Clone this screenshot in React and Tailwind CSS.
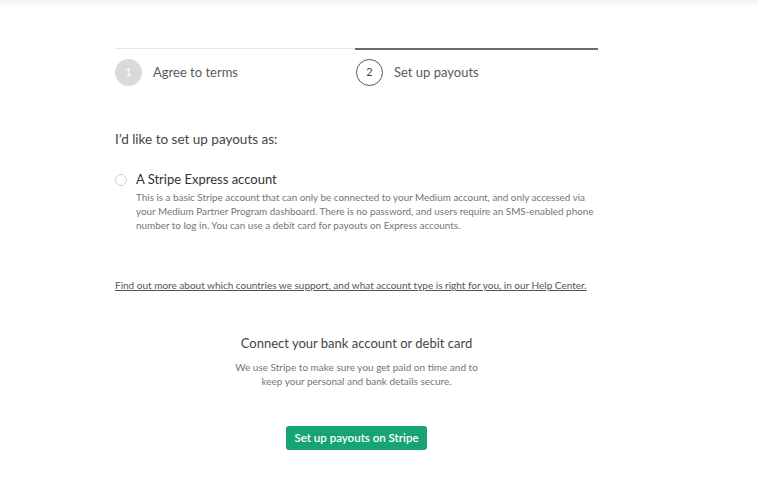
export default function App() {
  const font = { fontFamily: 'Lato, "Open Sans", sans-serif' };
  return (
    <div className="relative min-h-[501px] w-[758px] bg-white text-[#292929]" style={font}>
      <div className="h-[7px] bg-gradient-to-b from-[#f2f2f2] to-white" />
      <div className="ml-[115px] w-[483px] pt-[41px]">
        <div className="flex">
          <div className="w-[240px]">
            <div className="h-px bg-[#e6e6e6]" />
            <div className="mt-[10px] flex items-center">
              <div className="flex h-[27px] w-[27px] items-center justify-center rounded-full bg-[#dadada] text-[11px] text-white">1</div>
              <span className="ml-[11px] pt-[1px] text-[13px] text-[#5a5a5a]">Agree to terms</span>
            </div>
          </div>
          <div className="flex-1">
            <div className="h-[2px] bg-[#6b6b6b]" />
            <div className="mt-[9px] flex items-center pl-[1px]">
              <div className="flex h-[27px] w-[27px] items-center justify-center rounded-full border border-[#555] text-[11px] text-[#444]">2</div>
              <span className="ml-[11px] pt-[1px] text-[13px] text-[#5a5a5a]">Set up payouts</span>
            </div>
          </div>
        </div>

        <p className="mt-[43px] text-[13.5px] leading-[20px] text-[#444]">I’d like to set up payouts as:</p>

        <div className="mt-[21px] flex">
          <div className="mt-[4px] h-[12px] w-[12px] shrink-0 rounded-full border border-[#cfcfcf]" />
          <div className="ml-[9px]">
            <div className="text-[13px] leading-[18px] text-[#333]">A Stripe Express account</div>
            <p className="mt-[2px] text-[9.9px] leading-[14px] text-[#757575]">
              This is a basic Stripe account that can only be connected to your Medium account, and only accessed via your Medium Partner Program dashboard. There is no password, and users require an SMS-enabled phone number to log in. You can use a debit card for payouts on Express accounts.
            </p>
          </div>
        </div>

        <a href="#" className="mt-[46px] block text-[10px] leading-[14px] text-[#555] underline">
          Find out more about which countries we support, and what account type is right for you, in our Help Center.
        </a>

        <div className="mt-[42px] flex flex-col items-center text-center">
          <div className="text-[13px] leading-[18px] text-[#444]">Connect your bank account or debit card</div>
          <p className="mt-[8px] w-[245px] text-[10px] leading-[14px] text-[#757575]">
            We use Stripe to make sure you get paid on time and to keep your personal and bank details secure.
          </p>
          <button className="mt-[38px] h-[24px] w-[141px] rounded-[3px] bg-[#17a475] text-[11.5px] font-semibold text-white">
            Set up payouts on Stripe
          </button>
        </div>
      </div>
    </div>
  );
}
